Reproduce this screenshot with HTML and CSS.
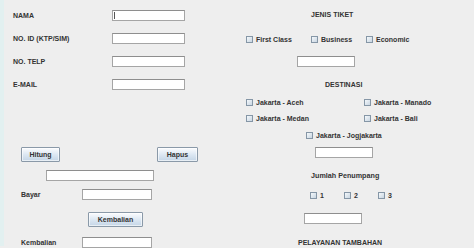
FILE: index.html
```html
<!DOCTYPE html>
<html lang="id">
<head>
  <meta charset="UTF-8" />
  <title>Pemesanan Tiket</title>
  <link rel="stylesheet" href="styles.css">
</head>
<body>
  <div class="jendela">

    <!-- Kolom kiri: data penumpang -->
    <div class="kolom kiri">
      <div class="baris data pertama">
        <span class="label">NAMA</span>
        <span class="isian lebar"><span class="kursor"></span></span>
      </div>
      <div class="baris data">
        <span class="label">NO. ID (KTP/SIM)</span>
        <span class="isian lebar"></span>
      </div>
      <div class="baris data">
        <span class="label">NO. TELP</span>
        <span class="isian lebar"></span>
      </div>
      <div class="baris data">
        <span class="label">E-MAIL</span>
        <span class="isian lebar"></span>
      </div>

      <div class="baris tombol-baris">
        <button class="tombol hitung">Hitung</button>
        <button class="tombol hapus">Hapus</button>
      </div>
      <div class="baris total">
        <span class="isian panjang"></span>
      </div>
      <div class="baris bayar">
        <span class="label kecil">Bayar</span>
        <span class="isian sedang"></span>
      </div>
      <div class="baris kembali-tombol">
        <button class="tombol kembalian">Kembalian</button>
      </div>
      <div class="baris kembali">
        <span class="label kecil">Kembalian</span>
        <span class="isian sedang"></span>
      </div>
    </div>

    <!-- Kolom kanan: pilihan tiket -->
    <div class="kolom kanan">
      <div class="judul j-tiket">JENIS TIKET</div>
      <div class="pilihan p-tiket">
        <label class="cek w-first"><span class="kotak"></span>First Class</label>
        <label class="cek w-business"><span class="kotak"></span>Business</label>
        <label class="cek"><span class="kotak"></span>Economic</label>
      </div>
      <span class="isian kecil-isi i-tiket"></span>

      <div class="judul j-destinasi">DESTINASI</div>
      <div class="pilihan p-dest1">
        <label class="cek w-dest"><span class="kotak"></span>Jakarta - Aceh</label>
        <label class="cek"><span class="kotak"></span>Jakarta - Manado</label>
      </div>
      <div class="pilihan p-dest2">
        <label class="cek w-dest"><span class="kotak"></span>Jakarta - Medan</label>
        <label class="cek"><span class="kotak"></span>Jakarta - Bali</label>
      </div>
      <div class="pilihan p-dest3">
        <label class="cek"><span class="kotak"></span>Jakarta - Jogjakarta</label>
      </div>
      <span class="isian kecil-isi i-dest"></span>

      <div class="judul j-jumlah">Jumlah Penumpang</div>
      <div class="pilihan p-jumlah">
        <label class="cek w-angka"><span class="kotak"></span>1</label>
        <label class="cek w-angka"><span class="kotak"></span>2</label>
        <label class="cek"><span class="kotak"></span>3</label>
      </div>
      <span class="isian kecil-isi i-jumlah"></span>

      <div class="judul j-layanan">PELAYANAN TAMBAHAN</div>
    </div>

  </div>
</body>
</html>
```

FILE: styles.css
```css
/* ---------- Dasar ---------- */
*{box-sizing:border-box}
html,body{margin:0;padding:0}
body{
  width:474px;
  height:248px;
  overflow:hidden;
  background:#eeeeee;
  font-family:"Liberation Sans",Arial,sans-serif;
  font-size:7px;
  font-weight:bold;
  color:#333;
}

/* ---------- Jendela ---------- */
.jendela{
  display:grid;
  grid-template-columns:236px 1fr;
  height:248px;
  border-left:4px solid #e2f0f0;
  border-top:2px solid #f3f3f3;
  margin-top:-2px;
}
.kolom{display:flex;flex-direction:column;align-items:flex-start}

/* ---------- Baris kiri ---------- */
.baris{display:flex;align-items:center}
.data{height:11px;margin-top:12px;padding-left:9px}
.data.pertama{margin-top:10px}
.label{width:99px;line-height:11px}
.label.kecil{width:61px}
.tombol-baris{margin-top:57px;padding-left:17px;width:194px;justify-content:space-between}
.total{margin-top:8px;padding-left:42px}
.bayar{margin-top:8px;padding-left:17px}
.kembali-tombol{margin-top:12px;padding-left:84px}
.kembali{margin-top:10px;padding-left:17px}

/* ---------- Isian teks ---------- */
.isian{
  display:block;
  position:relative;
  height:11px;
  background:#fff;
  border:1px solid #a5a5a5;
  border-top-color:#8e8e8e;
  flex:none;
}
.lebar{width:73px}
.panjang{width:108px}
.sedang{width:70px}
.kecil-isi{width:58px}
.kursor{
  position:absolute;
  left:1px;top:1px;
  width:1px;height:7px;
  background:#555;
}

/* ---------- Tombol ---------- */
.tombol{
  height:15px;
  padding:0;
  border:1px solid #8a99a8;
  border-radius:1px;
  background:linear-gradient(#fbfcfe,#dde8f3 50%,#c4d5e6);
  font:inherit;
  color:#333;
  box-shadow:inset 0 0 0 1px rgba(255,255,255,.6);
}
.hitung{width:39px}
.hapus{width:41px}
.kembalian{width:55px}

/* ---------- Kolom kanan ---------- */
.judul{line-height:10px;height:10px;white-space:nowrap}
.j-tiket{margin-top:10px;margin-left:71px}
.j-destinasi{margin-top:13px;margin-left:85px}
.j-jumlah{margin-top:13px;margin-left:71px;font-size:7.2px}
.j-layanan{margin-top:14px;margin-left:58px}

.pilihan{display:flex;height:10px;align-items:center;padding-left:6px}
.p-tiket{margin-top:14px}
.p-dest1{margin-top:7px}
.p-dest2{margin-top:6px}
.p-dest3{margin-top:7px;padding-left:66px}
.p-jumlah{margin-top:9px;padding-left:70px}

.i-tiket{margin-top:12px;margin-left:57px}
.i-dest{margin-top:7px;margin-left:75px}
.i-jumlah{margin-top:13px;margin-left:64px}

.cek{display:flex;align-items:center;white-space:nowrap}
.w-first{width:65px}
.w-business{width:55px}
.w-dest{width:118px}
.w-angka{width:34px}
.kotak{
  width:7px;height:7px;
  margin-right:3px;
  border:1px solid #8596a6;
  background:linear-gradient(135deg,#f4f8fb,#c9d6e2);
  flex:none;
}
```
